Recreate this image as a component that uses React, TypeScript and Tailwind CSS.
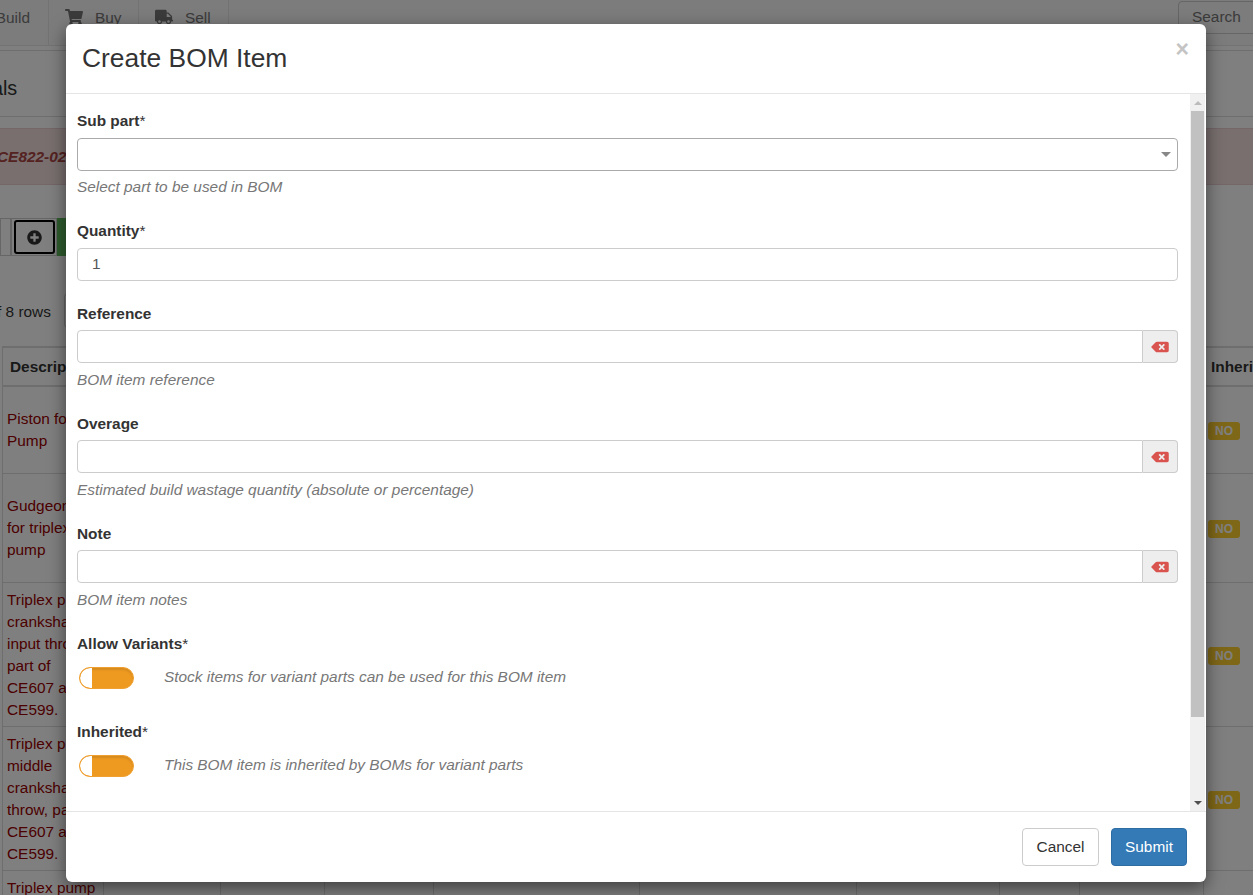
import { FaShoppingCart, FaTruck, FaPlusCircle, FaBackspace } from 'react-icons/fa'

const rows = [
  { h: 87, lines: ['Piston fo', 'Pump'] },
  { h: 109, lines: ['Gudgeon', 'for triplex', 'pump'] },
  { h: 144, lines: ['Triplex p', 'cranksha', 'input thro', 'part of', 'CE607 a', 'CE599.'] },
  { h: 144, lines: ['Triplex p', 'middle', 'cranksha', 'throw, pa', 'CE607 a', 'CE599.'] },
]

// column edges of the table, only visible in the strip under the dialog
const cols = [117, 104, 109, 206, 217, 143, 80, 124]

function Background() {
  return (
    <div className="h-[895px] overflow-hidden bg-white text-[15.4px] text-[#333]">
      <div className="flex h-[46px] items-start border-b border-[#e7e7e7] bg-[#f8f8f8] text-[#777]">
        <div className="flex h-[45px] w-[49px] justify-end border-r border-[#e7e7e7] pr-[18px] pt-[6px]"><span>Build</span></div>
        <div className="flex h-[45px] w-[90px] items-start gap-[12px] border-r border-[#e7e7e7] pl-[16px] pt-[6px]"><FaShoppingCart className="mt-[3px] h-[16px] w-[18px]" />Buy</div>
        <div className="flex h-[45px] w-[90px] items-start gap-[12px] border-r border-[#e7e7e7] pl-[16px] pt-[6px]"><FaTruck className="mt-[3px] h-[16px] w-[18px]" />Sell</div>
        <div className="ml-auto mr-[-6px] mt-px h-[33px] w-[81px] rounded-[4px] border border-[#ccc] pl-[13px] pt-[3px]">Search</div>
      </div>
      <div className="mt-[4px] flex h-[67px] items-center overflow-hidden border-y border-[#ddd] pt-[11px] text-[19.8px]"><span className="ml-[-63px]">Materials</span></div>
      <div className="mt-[11px] flex h-[57px] items-center overflow-hidden border-y border-[#ebccd1] bg-[#f2dede] font-bold italic text-[#a94442]"><span className="ml-[-3px]">CE822-02</span></div>
      <div className="mt-[33px] flex h-[38px] items-center">
        <div className="h-[38px] w-[11px] border border-[#ccc]" />
        <div className="flex h-[38px] w-[46px] items-center justify-center border border-[#ccc]">
          <div className="flex h-[34px] w-[41px] items-center justify-center rounded-[3px] border-2 border-black"><FaPlusCircle className="h-[15px] w-[15px]" /></div>
        </div>
        <div className="h-[38px] w-[10px] bg-[#5cb85c]" />
      </div>
      <div className="mt-[37px] flex h-[35px] items-center">
        <span className="ml-[-3px] pt-[2px]">f 8 rows</span>
        <div className="ml-[13px] h-[35px] w-[10px] rounded-l-[4px] border border-[#ccc]" />
      </div>
      <div className="ml-[2px] mt-[18px] border-l border-[#ddd]">
        <div className="flex h-[41px] items-center border-y-2 border-[#ddd] font-bold">
          <span className="ml-[7px]">Descrip</span>
          <span className="ml-auto mr-[-23px]">Inherited</span>
        </div>
        {rows.map((r, i) => (
          <div key={i} className="relative flex items-center border-b border-[#ddd] pl-[4px] leading-[22px] text-[#990000]" style={{ height: r.h }}>
            <div>{r.lines.map(l => <div key={l}>{l}</div>)}</div>
            <span className="absolute left-[1205px] top-1/2 mt-[-8px] flex h-[18px] w-[32px] items-center justify-center rounded-[3px] bg-[#ffcf30] text-[12px] font-bold text-white">NO</span>
          </div>
        ))}
        <div className="flex h-[34px] items-center leading-[22px] text-[#990000]">
          <div className="flex h-full w-[101px] shrink-0 items-center border-r border-[#ddd] pl-[4px]">Triplex pump</div>
          {cols.map((w, i) => <div key={i} className="h-full shrink-0 border-r border-[#ddd]" style={{ width: w }} />)}
        </div>
      </div>
    </div>
  )
}

function Label({ text, req }: { text: string; req?: boolean }) {
  return <div className="h-[20px] text-[15.4px] font-bold leading-[22px] text-[#333]">{text}{req && <span className="font-normal">*</span>}</div>
}

function Help({ text }: { text: string }) {
  return <div className="mt-[7px] h-[20px] text-[15.4px] italic leading-[20px] text-[#777]">{text}</div>
}

function ClearInput() {
  return (
    <div className="mt-[7px] flex h-[33px]">
      <div className="flex-1 rounded-l-[4px] border border-[#ccc] bg-white" />
      <div className="flex w-[35px] items-center justify-center rounded-r-[4px] border border-l-0 border-[#ccc] bg-[#eee]">
        <FaBackspace className="h-[14px] w-[20px] text-[#d9534f]" />
      </div>
    </div>
  )
}

function Toggle() {
  return (
    <div className="ml-[2px] flex h-[22px] w-[55px] shrink-0 items-center overflow-hidden rounded-full border border-[#f0a030] bg-[#ee9a21] shadow-[inset_0_2px_2px_rgba(0,0,0,0.1)]">
      <div className="h-full w-[12px] rounded-l-full bg-white" />
    </div>
  )
}

export default function App() {
  return (
    <div className="relative h-[895px] overflow-hidden font-['Liberation_Sans',Arial,sans-serif]">
      <Background />
      <div className="absolute inset-0 bg-black/50" />
      <div className="absolute left-[66px] top-[24px] flex h-[858px] w-[1140px] flex-col rounded-[6px] bg-white shadow-[0_6px_17px_rgba(0,0,0,0.5)]">
        <div className="relative flex h-[70px] shrink-0 items-center border-b border-[#e5e5e5] pb-[2px] pl-[16px]">
          <h3 className="text-[26.4px] leading-[30px] text-[#333]">Create BOM Item</h3>
          <span className="absolute right-[17px] top-[13px] text-[23px] font-bold leading-[24px] text-[#c4c4c4]">×</span>
        </div>
        <div className="flex min-h-0 flex-1">
          <div className="flex-1 pl-[11px] pr-[12px] pt-[16px] text-[15.4px]">
            <Label text="Sub part" req />
            <div className="mt-[8px] flex h-[33px] items-center justify-end rounded-[4px] border border-[#aaa] pr-[6px]">
              <div className="h-0 w-0 border-x-[5px] border-t-[5px] border-x-transparent border-t-[#888]" />
            </div>
            <div className="-mt-px"><Help text="Select part to be used in BOM" /></div>

            <div className="mt-[23px]"><Label text="Quantity" req /></div>
            <div className="mt-[8px] flex h-[33px] items-center rounded-[4px] border border-[#ccc] pb-[2px] pl-[14px] text-[#555]">1</div>

            <div className="mt-[22px]"><Label text="Reference" /></div>
            <div className="mt-px"><ClearInput /></div>
            <Help text="BOM item reference" />

            <div className="mt-[23px]"><Label text="Overage" /></div>
            <ClearInput />
            <Help text="Estimated build wastage quantity (absolute or percentage)" />

            <div className="mt-[23px]"><Label text="Note" /></div>
            <ClearInput />
            <Help text="BOM item notes" />

            <div className="mt-[23px]"><Label text="Allow Variants" req /></div>
            <div className="mt-[14px] flex h-[22px] items-center gap-[30px]">
              <Toggle />
              <span className="pb-[2px] italic text-[#777]">Stock items for variant parts can be used for this BOM item</span>
            </div>

            <div className="mt-[32px]"><Label text="Inherited" req /></div>
            <div className="mt-[14px] flex h-[22px] items-center gap-[30px]">
              <Toggle />
              <span className="pb-[2px] italic text-[#777]">This BOM item is inherited by BOMs for variant parts</span>
            </div>
          </div>
          <div className="mr-[1px] flex w-[15px] shrink-0 flex-col bg-[#f0f0f0] px-px">
            <div className="flex h-[17px] items-center justify-center">
              <div className="h-0 w-0 border-x-[4px] border-b-[4px] border-x-transparent border-b-[#bbb]" />
            </div>
            <div className="h-[606px] bg-[#c1c1c1]" />
            <div className="flex-1" />
            <div className="flex h-[17px] items-center justify-center">
              <div className="h-0 w-0 border-x-[4px] border-t-[4px] border-x-transparent border-t-[#505050]" />
            </div>
          </div>
        </div>
        <div className="flex h-[71px] shrink-0 items-center justify-end gap-[12px] border-t border-[#e5e5e5] pr-[19px]">
          <button className="h-[38px] w-[77px] rounded-[4px] border border-[#ccc] bg-white text-[15.4px] text-[#333]">Cancel</button>
          <button className="h-[38px] w-[76px] rounded-[4px] border border-[#2e6da4] bg-[#337ab7] text-[15.4px] text-white">Submit</button>
        </div>
      </div>
    </div>
  )
}
